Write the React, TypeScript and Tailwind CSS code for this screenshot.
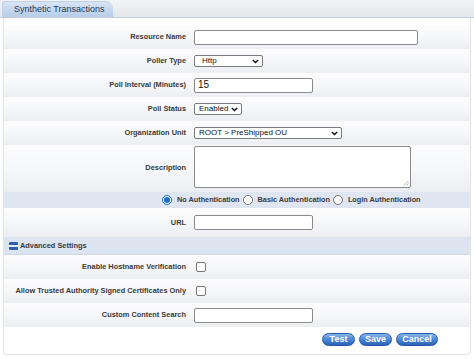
import React from "react";

const Chevron = () => (
  <svg width="7" height="5" viewBox="0 0 7 5" className="shrink-0">
    <path d="M0.8 0.9 L3.5 3.6 L6.2 0.9" fill="none" stroke="#111" strokeWidth="1.4" />
  </svg>
);

const Row = ({ label, h = 24, children }: { label: string; h?: number; children?: React.ReactNode }) => (
  <div
    className="flex items-center bg-gradient-to-b from-[#fcfcfd] via-[#f6f7f9] to-[#eceef2]"
    style={{ height: h }}
  >
    <div className="w-[182px] text-right text-[7.4px] font-bold text-[#3a3a3a] leading-none">{label}</div>
    <div className="ml-[8px] flex items-center">{children}</div>
  </div>
);

const Input = ({ w, value = "" }: { w: number; value?: string }) => (
  <div
    className="h-[15px] border border-[#8a8a8a] rounded-[2px] bg-white flex items-center pl-[3px] text-[10px] text-[#111] leading-none"
    style={{ width: w }}
  >
    {value}
  </div>
);

const Select = ({ w, value, pl = 4 }: { w: number; value: string; pl?: number }) => (
  <div
    className="h-[12px] border border-[#7a7a7a] rounded-[2px] bg-white flex items-center justify-between pr-[3px] text-[8px] text-[#111] leading-none"
    style={{ width: w, paddingLeft: pl }}
  >
    <span>{value}</span>
    <Chevron />
  </div>
);

const Check = () => <div className="w-[10px] h-[10px] border border-[#767676] rounded-[2px] bg-white ml-[2px]" />;

const Radio = ({ on }: { on?: boolean }) =>
  on ? (
    <div className="w-[10px] h-[10px] rounded-full border border-[#1a6fd6] bg-white flex items-center justify-center">
      <div className="w-[6px] h-[6px] rounded-full bg-[#1a6fd6]" />
    </div>
  ) : (
    <div className="w-[10px] h-[10px] rounded-full border border-[#777] bg-white" />
  );

const Btn = ({ w, children }: { w: number; children: React.ReactNode }) => (
  <div
    className="h-[13px] rounded-full border border-[#2457a6] bg-gradient-to-b from-[#8ab6ea] via-[#4d86d6] to-[#2b62b6] text-white text-[9px] font-bold flex items-center justify-center leading-none"
    style={{ width: w }}
  >
    {children}
  </div>
);

export default function App() {
  return (
    <div className="w-[474px] h-[359px] bg-white font-['Liberation_Sans',Arial,sans-serif] overflow-hidden">
      <div className="h-[18px] bg-gradient-to-b from-[#f2f3f6] to-[#e4e7eb] border-b border-[#c8cdd5] flex items-end pl-[2px]">
        <div className="h-[16px] w-[111px] rounded-tr-[8px] rounded-tl-[3px] bg-gradient-to-b from-[#d8e5f5] to-[#b6cce8] border-t border-l border-[#c0d0e5] text-[9px] text-[#22385a] pl-[11px] flex items-center leading-none">
          Synthetic Transactions
        </div>
      </div>
      <div className="mx-[3px] h-[337px] border-l border-r border-b rounded-b-[4px] border-[#e1e3e7] pt-[7px]">
        <Row label="Resource Name">
          <Input w={224} />
        </Row>
        <Row label="Poller Type">
          <Select w={69} value="Http" pl={7} />
        </Row>
        <Row label="Poll Interval (Minutes)">
          <Input w={119} value="15" />
        </Row>
        <Row label="Poll Status">
          <Select w={48} value="Enabled" />
        </Row>
        <Row label="Organization Unit">
          <Select w={148} value="ROOT > PreShipped OU" />
        </Row>
        <div className="h-[47px] flex bg-gradient-to-b from-[#fcfcfd] via-[#f6f7f9] to-[#eceef2]">
          <div className="w-[182px] text-right text-[7.4px] font-bold text-[#3a3a3a] leading-none pt-[19px]">Description</div>
          <div className="ml-[8px] pt-[1px]">
            <div className="w-[217px] h-[42px] border border-[#8a8a8a] rounded-[2px] bg-white relative">
              <svg width="6" height="6" viewBox="0 0 6 6" className="absolute right-[1px] bottom-[1px]">
                <path d="M5.5 1 L1 5.5 M5.5 3.5 L3.5 5.5" stroke="#999" strokeWidth="0.8" />
              </svg>
            </div>
          </div>
        </div>
        <div className="h-[16px] bg-[#dfe6f2] flex items-center pl-[158px] text-[7.3px] font-bold text-[#3a3a3a] leading-none">
          <Radio on />
          <span className="ml-[5px]">No Authentication</span>
          <span className="ml-[3px]"><Radio /></span>
          <span className="ml-[5px]">Basic Authentication</span>
          <span className="ml-[3px]"><Radio /></span>
          <span className="ml-[5px]">Login Authentication</span>
        </div>
        <Row label="URL" h={29}>
          <Input w={119} />
        </Row>
        <div className="h-[18px] bg-[#dce4f0] border-b border-[#cdd6e4] flex items-center pl-[5px] text-[7.4px] font-bold text-[#3a3a3a] leading-none">
          <div className="w-[9px] h-[8px] bg-[#2d5fae] rounded-[1px] flex items-center">
            <div className="w-full h-[2px] bg-[#e8eef8]" />
          </div>
          <span className="ml-[2px]">Advanced Settings</span>
        </div>
        <Row label="Enable Hostname Verification">
          <Check />
        </Row>
        <Row label="Allow Trusted Authority Signed Certificates Only">
          <Check />
        </Row>
        <Row label="Custom Content Search">
          <Input w={119} />
        </Row>
        <div className="flex gap-[4px] pl-[318px] pt-[6px]">
          <Btn w={33}>Test</Btn>
          <Btn w={33}>Save</Btn>
          <Btn w={42}>Cancel</Btn>
        </div>
      </div>
    </div>
  );
}
